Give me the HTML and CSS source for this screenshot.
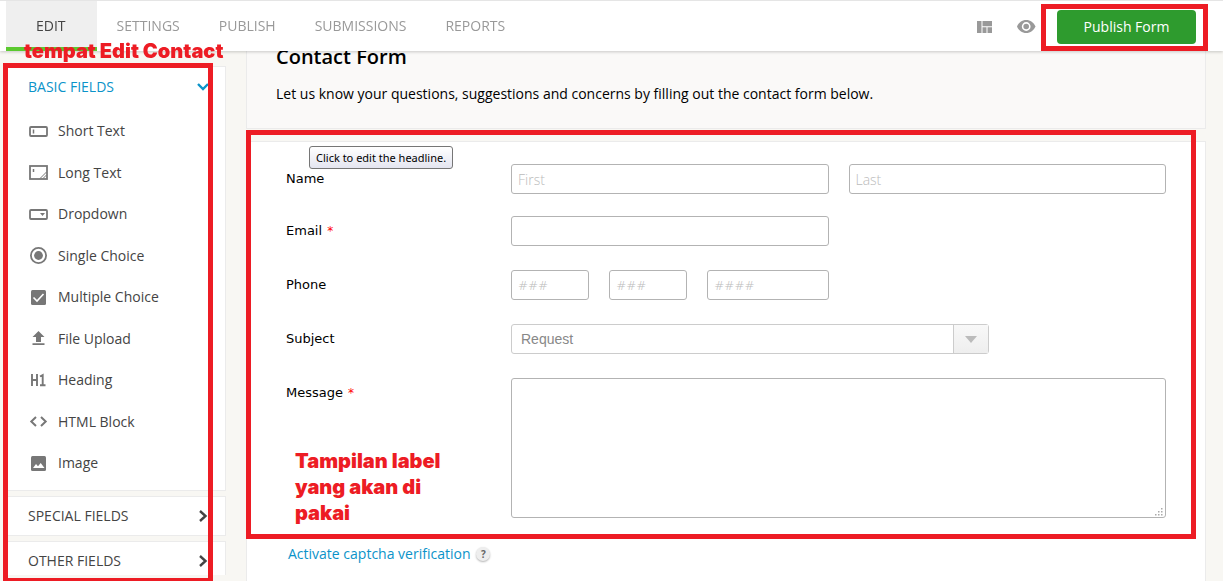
FILE: index.html
```html
<!DOCTYPE html>
<html lang="en">
<head>
<meta charset="utf-8">
<title>Contact Form</title>
<link rel="stylesheet" href="styles.css">
</head>
<body>
<header class="topbar">
  <nav class="tabs">
    <a class="tab tab-active" href="#edit">EDIT</a>
    <a class="tab" href="#settings">SETTINGS</a>
    <a class="tab" href="#publish">PUBLISH</a>
    <a class="tab" href="#submissions">SUBMISSIONS</a>
    <a class="tab" href="#reports">REPORTS</a>
  </nav>
  <div class="actions">
    <button class="icon-button" type="button" aria-label="Layout">
      <svg width="16" height="12" viewBox="0 0 16 12" fill="#999"><path d="M0 0h4.500v12H0zM5.500 0H15v5.300H5.500zM5.500 6.300h4V12h-4zM10.500 6.300H15V12h-4.500z"/></svg>
    </button>
    <button class="icon-button" type="button" aria-label="Preview">
      <svg width="19" height="13" viewBox="0 0 19 13"><path d="M0 6.500C1.700 2.500 5 0 9.200 0s7.500 2.500 9.200 6.500C16.700 10.500 13.400 13 9.200 13S1.700 10.500 0 6.500z" fill="#999"/><circle cx="9.200" cy="6.500" r="3.600" fill="#999" stroke="#fff" stroke-width="1.600"/></svg>
    </button>
    <button class="publish" type="button">Publish Form</button>
  </div>
</header>

<div class="workspace">
  <aside class="sidebar">
    <section class="panel">
      <button class="panel-title panel-open" type="button">BASIC FIELDS
        <svg width="12" height="8" viewBox="0 0 12 8" fill="none" stroke="#0b93c9" stroke-width="2.400"><path d="M1 1l5 5 5-5"/></svg>
      </button>
      <ul class="fields">
        <li><button class="field" type="button"><svg width="20" height="20" viewBox="0 0 20 20"><rect x="2" y="6" width="17" height="9" rx="1" fill="none" stroke="#777" stroke-width="1.800"/><path d="M5.500 8.500v4" stroke="#777" stroke-width="1.500"/></svg>Short Text</button></li>
        <li><button class="field" type="button"><svg width="20" height="20" viewBox="0 0 20 20"><rect x="2" y="3" width="17" height="13" fill="none" stroke="#777" stroke-width="1.800"/><path d="M5.500 6v3" stroke="#777" stroke-width="1.500"/><path d="M12 15.500l6.500-6.500M15 15.500l3.500-3.500" stroke="#777"/></svg>Long Text</button></li>
        <li><button class="field" type="button"><svg width="20" height="20" viewBox="0 0 20 20"><rect x="2" y="6" width="17" height="9" rx="1" fill="none" stroke="#777" stroke-width="1.800"/><path d="M12 9h5l-2.500 3z" fill="#777"/></svg>Dropdown</button></li>
        <li><button class="field" type="button"><svg width="20" height="20" viewBox="0 0 20 20"><circle cx="10.500" cy="9.500" r="7.600" fill="none" stroke="#777" stroke-width="1.800"/><circle cx="10.500" cy="9.500" r="4.400" fill="#777"/></svg>Single Choice</button></li>
        <li><button class="field" type="button"><svg width="20" height="20" viewBox="0 0 20 20"><rect x="3" y="3" width="15" height="15" rx="1.500" fill="#777"/><path d="M5.500 10.500l3.500 3.500 6.500-7" fill="none" stroke="#fff" stroke-width="1.600"/></svg>Multiple Choice</button></li>
        <li><button class="field" type="button"><svg width="20" height="20" viewBox="0 0 20 20" fill="#777"><path d="M10.500 2l6 6H13v5H8V8H4.500zM4.500 14.300h12V16h-12z"/></svg>File Upload</button></li>
        <li><button class="field" type="button"><svg width="20" height="20" viewBox="0 0 20 20" fill="none" stroke="#777" stroke-width="1.900"><path d="M4 4v12M9 4v12M4 10h5M12 6.500l2.700-1.500v11M12 15.200h5.500"/></svg>Heading</button></li>
        <li><button class="field" type="button"><svg width="20" height="20" viewBox="0 0 20 20" fill="none" stroke="#777" stroke-width="2"><path d="M8 5L3.300 9.500 8 14M13 5l4.700 4.500L13 14"/></svg>HTML Block</button></li>
        <li><button class="field" type="button"><svg width="20" height="20" viewBox="0 0 20 20"><rect x="3" y="3" width="15" height="15" rx="1.500" fill="#777"/><path d="M5 15l3-4 2 2.300L12.700 10l3.800 5z" fill="#fff"/></svg>Image</button></li>
      </ul>
    </section>
    <section class="panel">
      <button class="panel-title" type="button">SPECIAL FIELDS
        <svg width="12" height="12" viewBox="0 0 12 12" fill="none" stroke="#444" stroke-width="2.400"><path d="M3 1l5.500 5L3 11"/></svg>
      </button>
    </section>
    <section class="panel panel-cut">
      <button class="panel-title" type="button">OTHER FIELDS
        <svg width="12" height="12" viewBox="0 0 12 12" fill="none" stroke="#444" stroke-width="2.400"><path d="M3 1l5.500 5L3 11"/></svg>
      </button>
    </section>
  </aside>

  <main class="canvas">
    <section class="intro">
      <h1>Contact Form</h1>
      <p>Let us know your questions, suggestions and concerns by filling out the contact form below.</p>
    </section>
    <form class="form">
      <div class="row row-name">
        <label for="first">Name</label>
        <div class="controls">
          <input id="first" class="box" type="text" placeholder="First">
          <input class="box" type="text" placeholder="Last" aria-label="Last name">
        </div>
      </div>
      <div class="row">
        <label for="email">Email <span class="required">*</span></label>
        <div class="controls half"><input id="email" class="box" type="email"></div>
      </div>
      <div class="row">
        <label for="phone">Phone</label>
        <div class="controls half phone">
          <input id="phone" class="box" type="text" placeholder="###">
          <input class="box" type="text" placeholder="###" aria-label="Phone prefix">
          <input class="box" type="text" placeholder="####" aria-label="Phone line number">
        </div>
      </div>
      <div class="row">
        <label for="subject">Subject</label>
        <div class="controls select">
          <select id="subject"><option>Request</option></select>
          <span class="select-arrow"><svg width="12" height="7" viewBox="0 0 12 7"><path d="M0 0h12L6 7z" fill="#bbb"/></svg></span>
        </div>
      </div>
      <div class="row">
        <label for="message">Message <span class="required">*</span></label>
        <div class="controls message">
          <textarea id="message" class="box"></textarea>
          <svg class="grip" width="8" height="8" viewBox="0 0 8 8" fill="#aaa"><path d="M6 0h1.500v1.500H6zM6 3h1.500v1.500H6zM6 6h1.500v1.500H6zM3 3h1.500v1.500H3zM3 6h1.500v1.500H3zM0 6h1.500v1.500H0z"/></svg>
        </div>
      </div>
      <div class="captcha">
        <a href="#captcha">Activate captcha verification</a>
        <button class="help" type="button">?</button>
      </div>
    </form>
    <div class="tooltip" role="tooltip">Click to edit the headline.</div>
    <div class="mark mark-form"></div>
    <p class="note note-form">Tampilan label<br>yang akan di<br>pakai</p>
  </main>
</div>
<div class="mark mark-sidebar"></div>
<div class="mark mark-publish"></div>
<p class="note note-sidebar">tempat Edit Contact</p>
</body>
</html>
```
FILE: styles.css
```css
* { box-sizing: border-box; }

body {
  margin: 0;
  position: relative;
  background: #f8f7f3;
  color: #000;
  font: 14px/20px "Open Sans", sans-serif;
}

button {
  padding: 0;
  border: 0;
  background: none;
  color: inherit;
  font: inherit;
}

a { text-decoration: none; }

.topbar {
  position: fixed;
  top: 0;
  left: 0;
  right: 0;
  z-index: 2;
  display: flex;
  justify-content: space-between;
  height: 51px;
  padding: 0 27px 0 6px;
  border-top: 1px solid #e5e5e5;
  background: #fff;
  box-shadow: 0 1px 3px rgba(0, 0, 0, 0.2);
}

.tabs { display: flex; }

.tab {
  display: flex;
  align-items: center;
  padding: 4px 19px 0 20px;
  border-bottom: 4px solid transparent;
  color: #999;
}

.tab-active {
  padding: 4px 31px 0 30px;
  border-color: #5bc92f;
  background: #efefef;
  color: #444;
}

.actions {
  display: flex;
  align-items: center;
  gap: 24px;
  padding-top: 1px;
}

.icon-button { display: flex; }

.publish {
  width: 139px;
  height: 34px;
  margin-left: -3px;
  border-radius: 4px;
  background: #2e9b2e;
  color: #fff;
}

.workspace {
  display: grid;
  grid-template-columns: 219px 1fr;
  gap: 20px;
  min-height: 100vh;
  padding: 0 17px 0 7px;
}

.sidebar {
  display: flex;
  flex-direction: column;
  gap: 5px;
  padding-top: 66px;
}

.panel {
  border: 1px solid #ebebeb;
  background: #fff;
}

.panel-cut {
  height: 34px;
  border-bottom: 0;
  overflow: hidden;
}

.panel-title {
  display: flex;
  align-items: center;
  justify-content: space-between;
  width: 100%;
  height: 38px;
  padding: 0 16px 0 20px;
  color: #444;
}

.panel-open {
  height: 40px;
  color: #0b93c9;
}

.fields {
  display: flex;
  flex-direction: column;
  justify-content: space-between;
  height: 352px;
  margin: 14px 0 17px;
  padding: 0 20px;
  list-style: none;
}

.field {
  display: flex;
  gap: 10px;
  color: #444;
}

.canvas {
  position: relative;
  display: flex;
  flex-direction: column;
  gap: 12px;
  min-width: 0;
}

.intro {
  padding: 43px 29px 24px;
  border: 1px solid #ebebeb;
  border-top: 0;
  background: #faf9f8;
}

h1 {
  margin: 0 0 13px;
  font-size: 20px;
  line-height: 28px;
  font-weight: 600;
}

.intro p { margin: 0; }

.form {
  display: flex;
  flex: 1;
  flex-direction: column;
  gap: 24px;
  padding: 22px 39px 0;
  border: 1px solid #ebebeb;
  border-bottom: 0;
  background: #fff;
}

.row {
  display: grid;
  grid-template-columns: 225px 1fr;
}

.row-name { margin-bottom: -2px; }

.row label {
  font: 13px/30px "DejaVu Sans", sans-serif;
}

.required {
  margin-left: 1px;
  color: #f00;
  font-size: 12px;
}

.controls {
  display: flex;
  gap: 20px;
  min-width: 0;
}

.half { width: calc(50% - 10px); }

.box {
  flex: 1;
  min-width: 0;
  height: 30px;
  padding: 1px 6px 0;
  border: 1px solid #b3b3b3;
  border-radius: 3px;
  background: #fff;
  font: 14px "Open Sans", sans-serif;
}

.box::placeholder {
  color: #bbb;
  font-weight: 300;
}

.phone {
  display: grid;
  grid-template-columns: 78fr 78fr 121fr;
}

.phone .box { font: 12px "DejaVu Sans", sans-serif; }

.select {
  position: relative;
  width: 73%;
}

select {
  width: 100%;
  height: 30px;
  padding: 0 9px;
  appearance: none;
  border: 1px solid #ccc;
  border-radius: 3px;
  background: #fff;
  color: #888;
  font: 14px "Liberation Sans", Arial, sans-serif;
}

.select-arrow {
  position: absolute;
  top: 1px;
  right: 1px;
  bottom: 1px;
  width: 35px;
  display: flex;
  align-items: center;
  justify-content: center;
  border-left: 1px solid #ccc;
  background: linear-gradient(#f8f8f8, #eee);
  pointer-events: none;
}

.message { position: relative; }

.message .box {
  height: 140px;
  resize: none;
}

.grip {
  position: absolute;
  right: 3px;
  bottom: 2px;
}

.captcha {
  display: flex;
  align-items: center;
  gap: 6px;
  padding: 2px;
}

.captcha a { color: #0b93c9; }

.help {
  width: 14px;
  height: 14px;
  border-radius: 50%;
  background: #eee;
  box-shadow: 0 1px 2px rgba(0, 0, 0, 0.3);
  color: #666;
  font: bold 10px/14px "Open Sans", sans-serif;
}

.tooltip {
  position: absolute;
  top: 146px;
  left: 63px;
  padding: 0 6px;
  border: 1px solid #767676;
  border-radius: 3px;
  background: linear-gradient(#fff, #e4e5f0);
  font: 11px/21px "Noto Sans", sans-serif;
  white-space: nowrap;
}

.mark {
  position: absolute;
  z-index: 3;
  border: 5px solid #ed1c24;
  pointer-events: none;
}

.mark-form {
  top: 130px;
  left: 0;
  right: 10px;
  height: 409px;
}

.mark-sidebar {
  top: 63px;
  bottom: 0;
  left: 3px;
  width: 210px;
  border-bottom-width: 3px;
}

.mark-publish {
  top: 4px;
  right: 15px;
  width: 167px;
  height: 47px;
}

.note {
  position: absolute;
  z-index: 3;
  margin: 0;
  color: #ed1c24;
  font: 900 20px/26px Inter, sans-serif;
  white-space: nowrap;
}

.note-sidebar {
  top: 38px;
  left: 24px;
}

.note-form {
  top: 448px;
  left: 49px;
}
```
